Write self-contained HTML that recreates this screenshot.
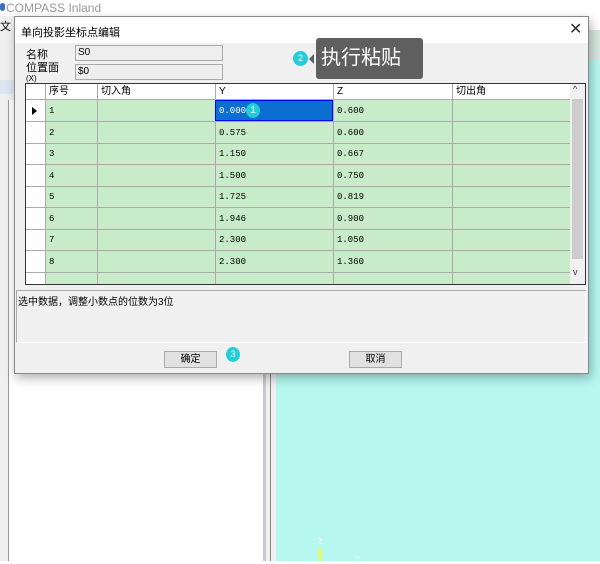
<!DOCTYPE html>
<html><head><meta charset="utf-8"><style>
*{margin:0;padding:0;box-sizing:border-box}
body{width:600px;height:561px;position:relative;overflow:hidden;background:#fff;font-family:"Liberation Sans","Noto Sans CJK SC",sans-serif;font-size:11px;color:#000}
.a{position:absolute}
.cell{position:absolute;font-family:"Liberation Mono","Noto Sans CJK SC",monospace;font-size:9px;padding-left:3px;line-height:22px}
</style></head><body>
<div class="a" style="left:0;top:0;width:600px;height:16px;background:#fff"></div>
<div class="a" style="left:6px;top:1px;font-size:12px;color:#999">COMPASS Inland</div>
<div class="a" style="left:0;top:3px;width:5px;height:8px;background:#3a6fc0;border-radius:3px"></div>
<div class="a" style="left:0;top:16px;width:14px;height:545px;background:#f0f0f0"></div>
<div class="a" style="left:0;top:18px;font-size:11px">文</div>
<div class="a" style="left:0;top:80px;width:14px;height:14px;background:#dde6f0"></div>
<div class="a" style="left:8px;top:100px;width:1px;height:461px;background:#999"></div>
<div class="a" style="left:9px;top:100px;width:257px;height:461px;background:#fff"></div>
<div class="a" style="left:263px;top:370px;width:3px;height:191px;background:#c8c8d0"></div>
<div class="a" style="left:266px;top:370px;width:10px;height:191px;background:#f0f0f0"></div>
<div class="a" style="left:270px;top:370px;width:1px;height:191px;background:#888"></div>
<div class="a" style="left:276px;top:60px;width:324px;height:501px;background:#b6f8f0"></div>
<div class="a" style="left:588px;top:30px;width:12px;height:30px;background:#d8e8e0"></div>
<div class="a" style="left:318px;top:537px;color:#fff;font-size:8px">Z</div>
<div class="a" style="left:319px;top:548px;width:2px;height:13px;background:#ff0"></div>
<div class="a" style="left:355px;top:555px;color:#fff;font-size:8px">Y</div>
<div class="a" style="left:14px;top:16px;width:575px;height:358px;background:#f0f0f0;border:1px solid #888;box-shadow:2px 4px 10px rgba(0,0,0,.3)"></div>
<div class="a" style="left:15px;top:17px;width:573px;height:26px;background:#fff"></div>
<div class="a" style="left:21px;top:24px;font-size:11px">单向投影坐标点编辑</div>
<div class="a" style="left:569px;top:19px;font-size:16px;color:#333">✕</div>
<div class="a" style="left:26px;top:46px;font-size:11px">名称</div>
<div class="a" style="left:26px;top:63px;font-size:11px;line-height:10px">位置面<br><span style="font-size:8px">(X)</span></div>
<div class="a" style="left:75px;top:45px;width:148px;height:16px;background:#eee;border:1px solid #aaa;font-size:10px;padding-left:2px;line-height:14px">S0</div>
<div class="a" style="left:75px;top:64px;width:148px;height:16px;background:#eee;border:1px solid #aaa;font-size:10px;padding-left:2px;line-height:14px">$0</div>
<div class="a" style="left:25px;top:83px;width:561px;height:202px;border:1px solid #333;background:#fff;overflow:hidden">
<div class="a" style="left:19px;top:16px;width:526px;height:190px;background:#c8ecca"></div>
<div class="a" style="left:0;top:15px;width:545px;height:1px;background:#aaa"></div>
</div>
<div id="g"></div>
<div class="a" style="left:570px;top:84px;width:15px;height:200px;background:#f0f0f0"></div>
<div class="a" style="left:572px;top:99px;width:11px;height:160px;background:#cdcdcd"></div>
<div class="a" style="left:573px;top:84px;font-size:9px;color:#333">^</div>
<div class="a" style="left:573px;top:267px;font-size:9px;color:#333">v</div>
<div class="a" style="left:316px;top:38px;width:107px;height:41px;background:#5f5f5f;border-radius:3px;color:#fff;font-size:20px;line-height:41px;padding-left:5px">执行粘贴</div>
<div class="a" style="left:309px;top:54px;width:0;height:0;border:5px solid transparent;border-right-color:#5f5f5f;border-left:0"></div>
<div class="a" style="left:293px;top:51px;width:15px;height:15px;border-radius:50%;background:#22cfd8;color:#fff;font-size:9px;text-align:center;line-height:15px">2</div>
<div class="a" style="left:16px;top:290px;width:570px;height:53px;border:1px solid #aaa;border-right-color:#fff;border-bottom-color:#fff;background:#f0f0f0;font-size:10px;padding:2px 1px">选中数据，调整小数点的位数为3位</div>
<div class="a" style="left:164px;top:351px;width:53px;height:17px;border:1px solid #aaa;background:#e1e1e1;text-align:center;font-size:10px;line-height:15px">确定</div>
<div class="a" style="left:349px;top:351px;width:53px;height:17px;border:1px solid #aaa;background:#e1e1e1;text-align:center;font-size:10px;line-height:15px">取消</div>
<div class="a" style="left:226px;top:347px;width:14px;height:15px;border-radius:50%;background:#22cfd8;color:#fff;font-size:9px;text-align:center;line-height:15px">3</div>
<script>
var cols=[26,45,97,215,333,452,570],hdr=["","序号","切入角","Y","Z","切出角"];
var Y=["0.000","0.575","1.150","1.500","1.725","1.946","2.300","2.300",""],Z=["0.600","0.600","0.667","0.750","0.819","0.900","1.050","1.360",""];
var h="";
for(var i=1;i<6;i++)h+='<div class="a" style="left:'+cols[i]+'px;top:84px;width:1px;height:200px;background:#aaa"></div>';
for(var i=1;i<6;i++)h+='<div class="cell" style="left:'+(cols[i]+1)+'px;top:81px;font-family:\'Liberation Sans\',\'Noto Sans CJK SC\',sans-serif;font-size:10px">'+hdr[i]+'</div>';
for(var r=0;r<9;r++){var t=100+r*21.5;
h+='<div class="a" style="left:26px;top:'+(t+21)+'px;width:544px;height:1px;background:#aaa"></div>';
if(r<8)h+='<div class="cell" style="left:46px;top:'+t+'px">'+(r+1)+'</div>';
h+='<div class="cell" style="left:216px;top:'+t+'px">'+Y[r]+'</div><div class="cell" style="left:334px;top:'+t+'px">'+Z[r]+'</div>';}
h+='<div class="a" style="left:215px;top:100px;width:118px;height:21px;background:#0a6fd0;border:1px solid #00f"></div><div class="cell" style="left:216px;top:100px;color:#fff">0.000</div>';
h+='<div class="a" style="left:246px;top:103px;width:14px;height:15px;border-radius:50%;background:#22cfd8;color:#fff;font-size:10px;text-align:center;line-height:15px">1</div>';
h+='<div class="a" style="left:32px;top:107px;width:0;height:0;border:4px solid transparent;border-left:5px solid #000;border-right:0"></div>';
document.getElementById("g").innerHTML=h;
</script>
</body></html>
